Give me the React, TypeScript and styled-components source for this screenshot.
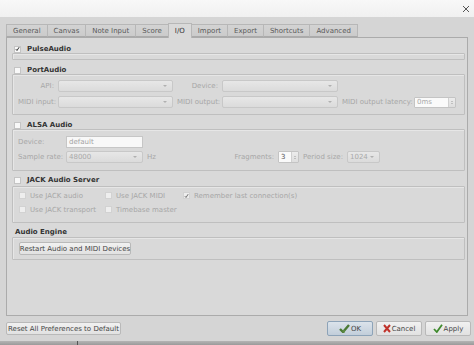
import React from "react";
import styled, { createGlobalStyle } from "styled-components";

const GlobalStyle = createGlobalStyle`
  html, body { margin: 0; padding: 0; background: #d5d5d5; }
  body { font-family: "DejaVu Sans", "Liberation Sans", sans-serif; font-size: 7px; }
  #root { width: 474px; height: 345px; overflow: hidden; }
  * { box-sizing: border-box; }
`;

const Window = styled.div`
  width: 474px;
  height: 345px;
  display: flex;
  flex-direction: column;
  background: #d5d5d5;
  color: #3a3a3a;
`;

const TitleBar = styled.div`
  height: 17px;
  flex: none;
  background: linear-gradient(#f8f8f8, #f0f0f0);
  display: flex;
  justify-content: flex-end;
  align-items: center;
  padding-right: 4px;
`;

const Body = styled.div`
  flex: 1;
  display: flex;
  flex-direction: column;
  padding-top: 6px;
`;

const TabBar = styled.div`
  height: 14px;
  flex: none;
  display: flex;
  align-items: flex-end;
  padding-left: 6px;
`;

const Tab = styled.div<{ $active?: boolean }>`
  height: ${(p) => (p.$active ? 15 : 13)}px;
  margin-bottom: ${(p) => (p.$active ? -1 : 0)}px;
  position: relative;
  z-index: ${(p) => (p.$active ? 1 : 0)};
  padding: 0 6px;
  display: flex;
  align-items: center;
  border: 1px solid #b7b7b7;
  border-bottom: ${(p) => (p.$active ? "none" : "1px solid #aaaaaa")};
  margin-left: -1px;
  background: ${(p) => (p.$active ? "#d9d9d9" : "linear-gradient(#d3d3d3, #cbcbcb)")};
  color: ${(p) => (p.$active ? "#333" : "#5a5a5a")};
  white-space: nowrap;
  &:first-child { margin-left: 0; }
`;

const Panel = styled.div`
  height: 279px;
  flex: none;
  margin: 0 6px;
  border: 1px solid #ababab;
  background: #d9d9d9;
  display: flex;
  flex-direction: column;
  padding: 7px 2px 0 5px;
`;

const Header = styled.div<{ $top?: number }>`
  height: 8px;
  margin-top: ${(p) => p.$top ?? 0}px;
  display: flex;
  align-items: center;
  gap: 6px;
  padding-left: 2px;
  font-weight: bold;
  color: #333333;
  line-height: 8px;
`;

const PlainHeader = styled(Header)`
  padding-left: 3px;
`;

const GroupBox = styled.div<{ $top?: number }>`
  margin-top: ${(p) => p.$top ?? 0}px;
  border: 1px solid #bfbfbf;
  box-shadow: inset 1px 1px 0 #e6e6e6;
  border-radius: 1px;
`;

const EmptyBox = styled(GroupBox)`
  height: 7px;
`;

const PortGrid = styled.div`
  display: grid;
  grid-template-columns: 36px 115px 41px 116px 68px 42px;
  grid-auto-rows: 12px;
  column-gap: 4px;
  row-gap: 4px;
  padding: 5px 0 6px 5px;
`;

const Label = styled.div<{ $align?: "left" | "right" }>`
  color: #a7a7a7;
  white-space: nowrap;
  text-align: ${(p) => p.$align ?? "right"};
  line-height: 12px;
  height: 12px;
`;

const Combo = styled.div<{ $w?: number }>`
  height: 12px;
  width: ${(p) => (p.$w ? `${p.$w}px` : "auto")};
  border: 1px solid #c8c8c8;
  border-radius: 2px;
  background: linear-gradient(#e7e7e7, #dbdbdb);
  display: flex;
  align-items: center;
  justify-content: space-between;
  padding: 0 5px 0 2px;
  color: #a9a9a9;
`;

const Arrow = styled.span`
  width: 0;
  height: 0;
  border-left: 2px solid transparent;
  border-right: 2px solid transparent;
  border-top: 2px solid #b0b0b0;
`;

const Spin = styled.div<{ $w: number; $h?: number }>`
  width: ${(p) => p.$w}px;
  height: ${(p) => p.$h ?? 11}px;
  align-self: center;
  display: flex;
  border: 1px solid #c4c4c4;
  border-radius: 1px;
  background: #fafafa;
`;

const SpinText = styled.div<{ $dark?: boolean }>`
  flex: 1;
  padding-left: 2px;
  display: flex;
  align-items: center;
  color: ${(p) => (p.$dark ? "#555" : "#a9a9a9")};
`;

const SpinButtons = styled.div`
  width: 7px;
  border-left: 1px solid #d0d0d0;
  background: linear-gradient(#ececec, #dedede);
  display: flex;
  flex-direction: column;
  align-items: center;
  justify-content: center;
  gap: 1px;
`;

const Up = styled.span`
  width: 0; height: 0;
  border-left: 1.5px solid transparent;
  border-right: 1.5px solid transparent;
  border-bottom: 1.5px solid #999;
`;
const Down = styled(Up)`
  border-bottom: none;
  border-top: 1.5px solid #999;
`;

const Rows = styled.div<{ $gap: number; $pt: number; $pb: number; $pr?: number }>`
  display: flex;
  flex-direction: column;
  gap: ${(p) => p.$gap}px;
  padding: ${(p) => p.$pt}px ${(p) => p.$pr ?? 0}px ${(p) => p.$pb}px 5px;
`;

const Row = styled.div<{ $h?: number }>`
  height: ${(p) => p.$h ?? 12}px;
  display: flex;
  align-items: center;
`;

const FixedLabel = styled(Label)<{ $w: number }>`
  width: ${(p) => p.$w}px;
  flex: none;
`;

const TextInput = styled.div<{ $w: number }>`
  width: ${(p) => p.$w}px;
  height: 12px;
  border: 1px solid #c6c6c6;
  background: #f8f8f8;
  color: #a3a3a3;
  display: flex;
  align-items: center;
  padding-left: 2px;
`;

const Unit = styled.span`
  margin-left: 4px;
  color: #a7a7a7;
`;

const RightGroup = styled.div`
  margin-left: auto;
  margin-right: 84px;
  display: flex;
  align-items: center;
  gap: 4px;
  color: #a7a7a7;
`;

const JackGrid = styled.div`
  display: grid;
  grid-template-columns: 86px 78px auto;
  grid-auto-rows: 11px;
  row-gap: 3px;
  padding: 3px 0 7px 6px;
`;

const CheckItem = styled.div<{ $disabled?: boolean }>`
  display: flex;
  align-items: center;
  gap: 4px;
  color: ${(p) => (p.$disabled ? "#a7a7a7" : "#3a3a3a")};
  white-space: nowrap;
`;

const Box = styled.div<{ $faint?: boolean }>`
  width: 7px;
  height: 7px;
  flex: none;
  border: 1px solid ${(p) => (p.$faint ? "#d2d2d2" : "#c4c4c4")};
  background: ${(p) => (p.$faint ? "#eeeeee" : "#f8f8f8")};
  display: flex;
  align-items: center;
  justify-content: center;
`;

const ButtonArea = styled.div`
  padding: 4px 0 4px 6px;
`;

const Button = styled.div<{ $w: number; $h?: number; $default?: boolean }>`
  width: ${(p) => p.$w}px;
  height: ${(p) => p.$h ?? 13}px;
  border: 1px solid ${(p) => (p.$default ? "#8da3b8" : "#b9b9b9")};
  border-radius: 2px;
  background: ${(p) =>
    p.$default ? "linear-gradient(#dbe3eb, #c2ceda)" : "linear-gradient(#f1f1f1, #e1e1e1)"};
  color: #454545;
  display: flex;
  align-items: center;
  justify-content: center;
  gap: 1px;
  white-space: nowrap;
`;

const Footer = styled.div`
  height: 25px;
  flex: none;
  display: flex;
  align-items: center;
  padding: 0 3px 0 6px;
  gap: 3px;
`;

const Spacer = styled.div`
  flex: 1;
`;

const BottomStrip = styled.div`
  height: 4px;
  flex: none;
  background: linear-gradient(#b4b4b4, #9a9a9a);
  display: flex;
  padding-left: 77px;
`;

const Tick = styled.div`
  width: 1px;
  height: 4px;
  background: #555;
`;

const Check = ({ color = "#222" }: { color?: string }) => (
  <svg width="6" height="6" viewBox="0 0 6 6">
    <path d="M1 3.2 L2.4 4.8 L5 0.8" stroke={color} strokeWidth="1.1" fill="none" />
  </svg>
);

const CheckBox = ({ checked, faint }: { checked?: boolean; faint?: boolean }) => (
  <Box $faint={faint}>{checked && <Check color={faint ? "#666" : "#222"} />}</Box>
);

const CloseIcon = () => (
  <svg width="8" height="8" viewBox="0 0 8 8">
    <path d="M1 1 L7 7 M7 1 L1 7" stroke="#555" strokeWidth="1" />
  </svg>
);

const OkIcon = () => (
  <svg width="11" height="9" viewBox="0 0 11 9">
    <path d="M1 5 L4 8 L10 1" stroke="#4a7a34" strokeWidth="2.4" fill="none" strokeLinejoin="round" />
    <path d="M3.5 6 L6 6 L6 8.5 L3.5 8.5Z" fill="#5c8a43" />
  </svg>
);

const CancelIcon = () => (
  <svg width="8" height="9" viewBox="0 0 8 9">
    <path d="M1 1 L7 8 M7 1 L1 8" stroke="#c0322a" strokeWidth="2" />
  </svg>
);

const ApplyIcon = () => (
  <svg width="10" height="9" viewBox="0 0 10 9">
    <path d="M1 5 L3.8 8 L9 0.8" stroke="#3f8a2c" strokeWidth="1.8" fill="none" />
  </svg>
);

const tabs = ["General", "Canvas", "Note Input", "Score", "I/O", "Import", "Export", "Shortcuts", "Advanced"];

const SpinBox = ({ w, value, dark, h }: { w: number; value: string; dark?: boolean; h?: number }) => (
  <Spin $w={w} $h={h}>
    <SpinText $dark={dark}>{value}</SpinText>
    <SpinButtons>
      <Up />
      <Down />
    </SpinButtons>
  </Spin>
);

export default function App() {
  return (
    <>
      <GlobalStyle />
      <Window>
        <TitleBar>
          <CloseIcon />
        </TitleBar>
        <Body>
          <TabBar>
            {tabs.map((t) => (
              <Tab key={t} $active={t === "I/O"}>
                {t}
              </Tab>
            ))}
          </TabBar>
          <Panel>
            <Header>
              <CheckBox checked />
              PulseAudio
            </Header>
            <EmptyBox />

            <Header $top={6}>
              <CheckBox />
              PortAudio
            </Header>
            <GroupBox>
              <PortGrid>
                <Label>API:</Label>
                <Combo>
                  <span />
                  <Arrow />
                </Combo>
                <Label>Device:</Label>
                <Combo>
                  <span />
                  <Arrow />
                </Combo>
                <span />
                <span />
                <Label>MIDI input:</Label>
                <Combo>
                  <span />
                  <Arrow />
                </Combo>
                <Label>MIDI output:</Label>
                <Combo>
                  <span />
                  <Arrow />
                </Combo>
                <Label $align="left">MIDI output latency:</Label>
                <SpinBox w={42} value="0ms" />
              </PortGrid>
            </GroupBox>

            <Header $top={6}>
              <CheckBox />
              ALSA Audio
            </Header>
            <GroupBox>
              <Rows $gap={3} $pt={6} $pb={7}>
                <Row>
                  <FixedLabel $w={48} $align="left">
                    Device:
                  </FixedLabel>
                  <TextInput $w={77}>default</TextInput>
                </Row>
                <Row>
                  <FixedLabel $w={48} $align="left">
                    Sample rate:
                  </FixedLabel>
                  <Combo $w={77}>
                    <span>48000</span>
                    <Arrow />
                  </Combo>
                  <Unit>Hz</Unit>
                  <RightGroup>
                    <span>Fragments:</span>
                    <SpinBox w={21} h={12} value="3" dark />
                    <span>Period size:</span>
                    <Combo $w={33}>
                      <span>1024</span>
                      <Arrow />
                    </Combo>
                  </RightGroup>
                </Row>
              </Rows>
            </GroupBox>

            <Header $top={5}>
              <CheckBox />
              JACK Audio Server
            </Header>
            <GroupBox $top={2}>
              <JackGrid>
                <CheckItem $disabled>
                  <CheckBox faint />
                  Use JACK audio
                </CheckItem>
                <CheckItem $disabled>
                  <CheckBox faint />
                  Use JACK MIDI
                </CheckItem>
                <CheckItem $disabled>
                  <CheckBox faint checked />
                  Remember last connection(s)
                </CheckItem>
                <CheckItem $disabled>
                  <CheckBox faint />
                  Use JACK transport
                </CheckItem>
                <CheckItem $disabled>
                  <CheckBox faint />
                  Timebase master
                </CheckItem>
              </JackGrid>
            </GroupBox>

            <PlainHeader $top={5}>Audio Engine</PlainHeader>
            <GroupBox $top={1}>
              <ButtonArea>
                <Button $w={112}>Restart Audio and MIDI Devices</Button>
              </ButtonArea>
            </GroupBox>
          </Panel>
          <Footer>
            <Button $w={115}>Reset All Preferences to Default</Button>
            <Spacer />
            <Button $w={46} $h={15} $default>
              <OkIcon />
              OK
            </Button>
            <Button $w={46} $h={15}>
              <CancelIcon />
              Cancel
            </Button>
            <Button $w={46} $h={15}>
              <ApplyIcon />
              Apply
            </Button>
          </Footer>
          <BottomStrip>
            <Tick />
          </BottomStrip>
        </Body>
      </Window>
    </>
  );
}
